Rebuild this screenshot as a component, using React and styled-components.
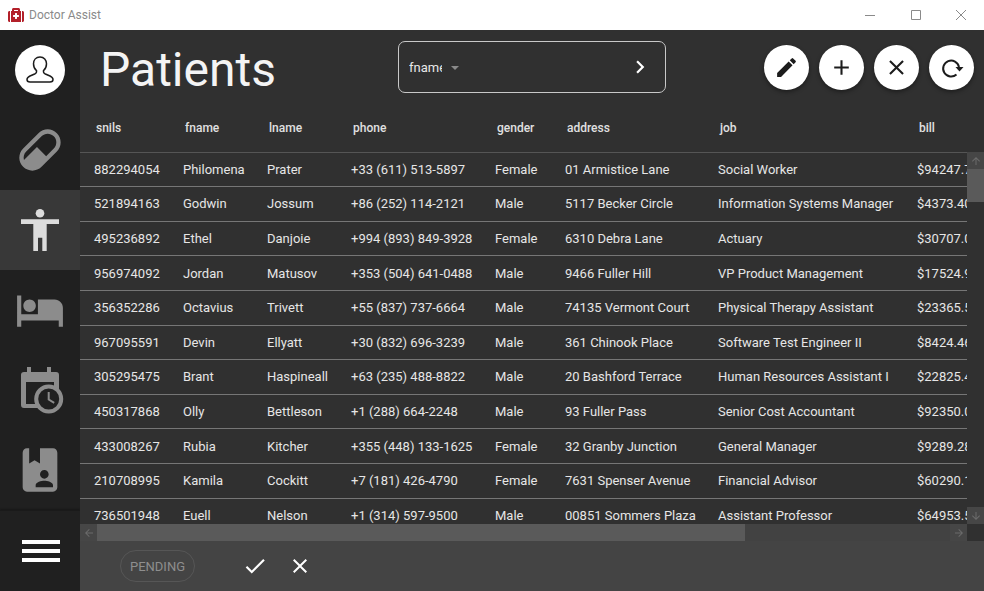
import React from 'react';
import styled, { createGlobalStyle } from 'styled-components';
import {
  MdEdit, MdAdd, MdClose, MdCheck, MdHotel, MdChevronRight,
  MdArrowUpward, MdArrowDownward, MdArrowBack, MdArrowForward,
} from 'react-icons/md';
import { FaMedkit } from 'react-icons/fa';

const GlobalStyle = createGlobalStyle`
  html, body { margin: 0; padding: 0; background: #303030; }
  body { font-family: Roboto, "Liberation Sans", sans-serif; overflow: hidden; }
`;

const Window = styled.div`
  width: 984px;
  height: 591px;
  display: flex;
  flex-direction: column;
  overflow: hidden;
`;

const TitleBar = styled.div`
  height: 30px;
  flex: none;
  background: #fff;
  display: flex;
  align-items: center;
  padding-left: 8px;
  color: #8a8a8a;
  font-size: 12px;
`;

const AppName = styled.span`
  margin-left: 5px;
  flex: 1;
`;

const WinControls = styled.div`
  display: flex;
  align-items: center;
  height: 100%;
  padding-right: 18px;
  gap: 35.5px;
`;

const Body = styled.div`
  flex: 1;
  display: flex;
  min-height: 0;
`;

const Sidebar = styled.nav`
  width: 80px;
  flex: none;
  background: #202020;
  display: flex;
  flex-direction: column;
`;

const NavItem = styled.div`
  height: 80px;
  flex: none;
  box-sizing: border-box;
  padding-left: ${p => p.$nudge || 0}px;
  display: flex;
  align-items: center;
  justify-content: center;
  color: ${p => (p.$active ? '#dcdcdc' : '#8c8c8c')};
  background: ${p => (p.$active ? '#383838' : 'transparent')};
`;

const Avatar = styled.div`
  width: 50px;
  height: 50px;
  box-sizing: border-box;
  padding-bottom: 2px;
  border-radius: 50%;
  background: #fff;
  display: flex;
  align-items: center;
  justify-content: center;
`;

const MenuItem = styled.div`
  flex: 1;
  border-top: 1px solid #1a1a1a;
  box-shadow: 0 -1px 2px rgba(0, 0, 0, 0.3);
  display: flex;
  flex-direction: column;
  align-items: center;
  justify-content: center;
  gap: 5px;
  padding: 0 0 1px 2px;
`;

const MenuBar = styled.span`
  width: 38px;
  height: 4px;
  background: #fff;
`;

const Main = styled.main`
  flex: 1;
  min-width: 0;
  display: flex;
  flex-direction: column;
  background: #303030;
`;

const Header = styled.header`
  height: 80px;
  flex: none;
  display: flex;
  align-items: center;
  padding: 0 10px 0 20px;
`;

const Title = styled.h1`
  margin: 0;
  width: 298px;
  flex: none;
  font-size: 48px;
  font-weight: 400;
  color: #f4f4f4;
  line-height: 1;
`;

const Search = styled.div`
  width: 268px;
  height: 52px;
  box-sizing: border-box;
  border: 1px solid #c8c8c8;
  border-radius: 7px;
  display: flex;
  align-items: center;
  padding: 0 12px 0 10px;
  color: #e8e8e8;
  font-size: 13px;
  margin-top: -6px;
`;

const SearchField = styled.span`
  width: 33px;
  overflow: hidden;
  white-space: nowrap;
`;

const Caret = styled.span`
  width: 0;
  height: 0;
  margin: 2px auto 0 9px;
  border-left: 4px solid transparent;
  border-right: 4px solid transparent;
  border-top: 4px solid #8a8a8a;
`;

const SearchGo = styled.span`
  display: flex;
  color: #fff;
`;

const Actions = styled.div`
  margin-left: auto;
  display: flex;
  gap: 10px;
  margin-top: -5px;
`;

const Fab = styled.button`
  width: 45px;
  height: 45px;
  border: none;
  padding: 0;
  border-radius: 50%;
  background: #fff;
  color: #1c1c1c;
  display: flex;
  align-items: center;
  justify-content: center;
  box-shadow: 0 2px 4px rgba(0, 0, 0, 0.4);
`;

const TableArea = styled.section`
  flex: 1;
  min-height: 0;
  display: flex;
`;

const TableColumn = styled.div`
  width: 887px;
  flex: none;
  display: flex;
  flex-direction: column;
`;

const Viewport = styled.div`
  flex: 1;
  min-height: 0;
  overflow: hidden;
`;

const Row = styled.div`
  display: grid;
  grid-template-columns: 89px 84px 84px 144px 70px 153px 199px 120px;
  box-sizing: border-box;
  height: ${p => (p.$head ? '42.6px' : '34.6px')};
  border-bottom: 1px solid ${p => (p.$head ? '#555' : '#767676')};
  color: ${p => (p.$head ? '#e0e0e0' : '#e6e6e6')};
  font-size: ${p => (p.$head ? '12px' : '13px')};
  font-weight: ${p => (p.$head ? 500 : 400)};
`;

const Cell = styled.div`
  display: flex;
  align-items: center;
  padding-left: ${p => (p.$head ? '16px' : '14px')};
  padding-bottom: ${p => (p.$head ? '6px' : '0')};
  white-space: nowrap;
`;

const HScroll = styled.div`
  height: 17px;
  flex: none;
  display: flex;
  background: #424242;
`;

const VScroll = styled.div`
  width: 17px;
  flex: none;
  margin: 42px 0 17px;
  display: flex;
  flex-direction: column;
`;

const ScrollButton = styled.div`
  width: 17px;
  height: 17px;
  flex: none;
  background: #464646;
  color: #6a6a6a;
  display: flex;
  align-items: center;
  justify-content: center;
`;

const HThumb = styled.div`
  width: 648px;
  background: #5a5a5a;
`;

const VThumb = styled.div`
  height: 33px;
  background: #5a5a5a;
`;

const Spacer = styled.div`
  flex: 1;
`;

const BottomBar = styled.footer`
  height: 50px;
  flex: none;
  background: #444;
  display: flex;
  align-items: center;
  padding-left: 40px;
  color: #fff;
`;

const Chip = styled.div`
  width: 75px;
  height: 32px;
  box-sizing: border-box;
  border: 1px solid #565656;
  border-radius: 16px;
  color: #8e8e8e;
  font-size: 13px;
  display: flex;
  align-items: center;
  justify-content: center;
  margin-right: 47px;
`;

const BarIcon = styled.span`
  display: flex;
  margin-right: 20px;
`;

const columns = ['snils', 'fname', 'lname', 'phone', 'gender', 'address', 'job', 'bill'];

const patients = [
  ['882294054', 'Philomena', 'Prater', '+33 (611) 513-5897', 'Female', '01 Armistice Lane', 'Social Worker', '$94247.73'],
  ['521894163', 'Godwin', 'Jossum', '+86 (252) 114-2121', 'Male', '5117 Becker Circle', 'Information Systems Manager', '$4373.40'],
  ['495236892', 'Ethel', 'Danjoie', '+994 (893) 849-3928', 'Female', '6310 Debra Lane', 'Actuary', '$30707.02'],
  ['956974092', 'Jordan', 'Matusov', '+353 (504) 641-0488', 'Male', '9466 Fuller Hill', 'VP Product Management', '$17524.91'],
  ['356352286', 'Octavius', 'Trivett', '+55 (837) 737-6664', 'Male', '74135 Vermont Court', 'Physical Therapy Assistant', '$23365.54'],
  ['967095591', 'Devin', 'Ellyatt', '+30 (832) 696-3239', 'Male', '361 Chinook Place', 'Software Test Engineer II', '$8424.46'],
  ['305295475', 'Brant', 'Haspineall', '+63 (235) 488-8822', 'Male', '20 Bashford Terrace', 'Human Resources Assistant I', '$22825.43'],
  ['450317868', 'Olly', 'Bettleson', '+1 (288) 664-2248', 'Male', '93 Fuller Pass', 'Senior Cost Accountant', '$92350.06'],
  ['433008267', 'Rubia', 'Kitcher', '+355 (448) 133-1625', 'Female', '32 Granby Junction', 'General Manager', '$9289.28'],
  ['210708995', 'Kamila', 'Cockitt', '+7 (181) 426-4790', 'Female', '7631 Spenser Avenue', 'Financial Advisor', '$60290.17'],
  ['736501948', 'Euell', 'Nelson', '+1 (314) 597-9500', 'Male', '00851 Sommers Plaza', 'Assistant Professor', '$64953.52'],
];

const Glyph = ({ d, size }) => (
  <svg width={size} height={size} viewBox="0 0 24 24" fill="currentColor"><path d={d} /></svg>
);

const PILL = 'M4.22,11.29L11.29,4.22C13.64,1.88 17.43,1.88 19.78,4.22C22.12,6.56 22.12,10.36 19.78,12.71L12.71,19.78C10.36,22.12 6.56,22.12 4.22,19.78C1.88,17.43 1.88,13.64 4.22,11.29M5.64,12.71C4.59,13.75 4.24,15.24 4.6,16.57L10.59,10.59L14.83,14.83L18.36,11.29C19.93,9.73 19.93,7.2 18.36,5.64C16.8,4.07 14.27,4.07 12.71,5.64L5.64,12.71Z';
const BOOK = 'M18 2H12V9L9.5 7.5L7 9V2H6C4.9 2 4 2.9 4 4V20C4 21.1 4.9 22 6 22H18C19.1 22 20 21.1 20 20V4C20 2.89 19.1 2 18 2M14 12C15.1 12 16 12.9 16 14S15.1 16 14 16 12 15.1 12 14 12.9 12 14 12M18 20H10V19C10 17.67 12.67 17 14 17S18 17.67 18 19V20Z';

const UserOutline = () => (
  <svg width="28" height="27" viewBox="0 0 28 27" fill="none" stroke="#1c1c1c" strokeWidth="1.5">
    <path d="M14 1c-4 0-6.500 3-6.500 6.800 0 3 1.300 5.500 3 6.800v1.400c0 .8-.5 1.300-1.300 1.700L4 20c-1.800.9-3 2.200-3 3.500C1 25 2 26 4 26h20c2 0 3-1 3-2.500 0-1.300-1.200-2.600-3-3.500l-5.200-2.300c-.8-.4-1.300-.9-1.300-1.700v-1.400c1.700-1.300 3-3.800 3-6.800C20.500 4 18 1 14 1z" />
  </svg>
);

const StandingPerson = () => (
  <svg width="40" height="44" viewBox="0 0 40 44" fill="currentColor">
    <circle cx="20" cy="5.300" r="4.300" />
    <path d="M1 11.300H39V16H26.700V43H22.300V29.700H18V43H13.300V16H1Z" />
  </svg>
);

const CalendarClock = () => (
  <svg width="44" height="48" viewBox="0 0 44 48" fill="currentColor">
    <path d="M7 1h4v5H7zM27 1h4v5h-4z" />
    <path fillRule="evenodd" d="M4 6h32a3 3 0 0 1 3 3v30a3 3 0 0 1-3 3H4a3 3 0 0 1-3-3V9a3 3 0 0 1 3-3zM6 16v22h28V16z" />
    <circle cx="28.700" cy="33" r="12.500" fill="#202020" stroke="currentColor" strokeWidth="4" />
    <path d="M27.700 26h2v7l5 3-1 1.700-6-3.600z" />
  </svg>
);

const RotateArrow = () => (
  <svg width="24" height="24" viewBox="0 0 24 24">
    <path d="M19 11A8 8 0 1 0 16.500 18.500" fill="none" stroke="currentColor" strokeWidth="2" />
    <path d="M15.500 11h8l-4 4.500z" fill="currentColor" />
  </svg>
);

const Minimize = () => (
  <svg width="10" height="10" viewBox="0 0 10 10" stroke="#8a8a8a"><path d="M0 5.500h10" /></svg>
);
const Maximize = () => (
  <svg width="10" height="10" viewBox="0 0 10 10" fill="none" stroke="#8a8a8a"><path d="M.5.500h9v9h-9z" /></svg>
);
const CloseWin = () => (
  <svg width="10" height="10" viewBox="0 0 10 10" stroke="#8a8a8a"><path d="M0 0l10 10M10 0L0 10" /></svg>
);

export default function App() {
  return (
    <Window>
      <GlobalStyle />
      <TitleBar>
        <FaMedkit size={16} color="#b3202a" />
        <AppName>Doctor Assist</AppName>
        <WinControls>
          <Minimize />
          <Maximize />
          <CloseWin />
        </WinControls>
      </TitleBar>
      <Body>
        <Sidebar>
          <NavItem><Avatar><UserOutline /></Avatar></NavItem>
          <NavItem><Glyph d={PILL} size={52} /></NavItem>
          <NavItem $active><StandingPerson /></NavItem>
          <NavItem><MdHotel size={50} /></NavItem>
          <NavItem $nudge={4}><CalendarClock /></NavItem>
          <NavItem><Glyph d={BOOK} size={52} /></NavItem>
          <MenuItem>
            <MenuBar />
            <MenuBar />
            <MenuBar />
          </MenuItem>
        </Sidebar>
        <Main>
          <Header>
            <Title>Patients</Title>
            <Search>
              <SearchField>fname</SearchField>
              <Caret />
              <SearchGo><MdChevronRight size={26} /></SearchGo>
            </Search>
            <Actions>
              <Fab><MdEdit size={25} /></Fab>
              <Fab><MdAdd size={25} /></Fab>
              <Fab><MdClose size={25} /></Fab>
              <Fab><RotateArrow /></Fab>
            </Actions>
          </Header>
          <TableArea>
            <TableColumn>
              <Viewport>
                <Row $head>
                  {columns.map(c => <Cell $head key={c}>{c}</Cell>)}
                </Row>
                {patients.map(p => (
                  <Row key={p[0]}>
                    {p.map((v, i) => <Cell key={i}>{v}</Cell>)}
                  </Row>
                ))}
              </Viewport>
              <HScroll>
                <ScrollButton><MdArrowBack size={12} /></ScrollButton>
                <HThumb />
                <Spacer />
                <ScrollButton><MdArrowForward size={12} /></ScrollButton>
              </HScroll>
            </TableColumn>
            <VScroll>
              <ScrollButton><MdArrowUpward size={12} /></ScrollButton>
              <VThumb />
              <Spacer />
              <ScrollButton><MdArrowDownward size={12} /></ScrollButton>
            </VScroll>
          </TableArea>
          <BottomBar>
            <Chip>PENDING</Chip>
            <BarIcon><MdCheck size={26} /></BarIcon>
            <BarIcon><MdClose size={24} /></BarIcon>
          </BottomBar>
        </Main>
      </Body>
    </Window>
  );
}
